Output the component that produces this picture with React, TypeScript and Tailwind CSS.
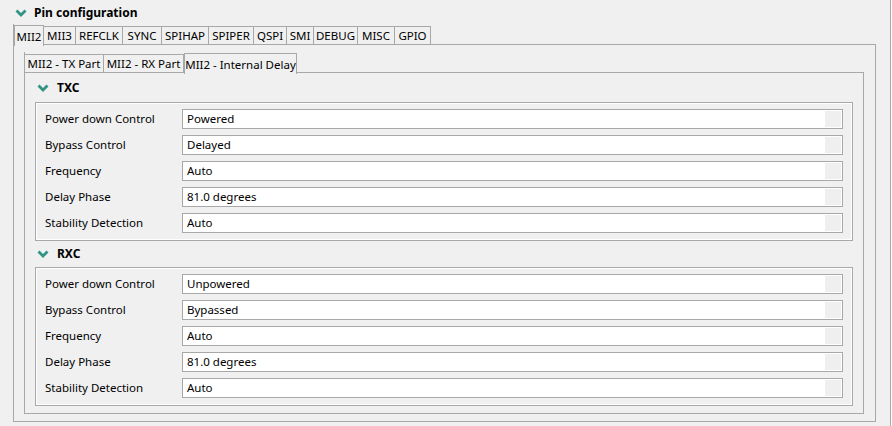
import React from "react"

const outerTabs: [string, number][] = [
  ["MII2", 30],
  ["MII3", 32],
  ["REFCLK", 47],
  ["SYNC", 39],
  ["SPIHAP", 47],
  ["SPIPER", 45],
  ["QSPI", 33],
  ["SMI", 27],
  ["DEBUG", 44],
  ["MISC", 37],
  ["GPIO", 36],
]

const innerTabs: [string, number][] = [
  ["MII2 - TX Part", 79],
  ["MII2 - RX Part", 80],
  ["MII2 - Internal Delay", 113],
]

const txc: [string, string][] = [
  ["Power down Control", "Powered"],
  ["Bypass Control", "Delayed"],
  ["Frequency", "Auto"],
  ["Delay Phase", "81.0 degrees"],
  ["Stability Detection", "Auto"],
]

const rxc: [string, string][] = [
  ["Power down Control", "Unpowered"],
  ["Bypass Control", "Bypassed"],
  ["Frequency", "Auto"],
  ["Delay Phase", "81.0 degrees"],
  ["Stability Detection", "Auto"],
]

function Chevron() {
  return (
    <svg width="12" height="8" viewBox="0 0 12 8" className="shrink-0">
      <polyline points="1.5,1.5 6,6 10.5,1.5" fill="none" stroke="#2f9484" strokeWidth="2.8" />
    </svg>
  )
}

function Tabs({ tabs, active }: { tabs: [string, number][]; active: number }) {
  return (
    <div className="flex items-end h-[21px]">
      {tabs.map(([name, w], i) =>
        i === active ? (
          <div
            key={name}
            style={{ width: w }}
            className="h-[21px] -mb-px bg-[#f0f0f0] border border-b-0 border-[#a8a8a8] flex items-center justify-center pt-px whitespace-nowrap relative z-10"
          >
            {name}
          </div>
        ) : (
          <div
            key={name}
            style={{ width: w }}
            className="h-[19px] border-t border-r border-b border-[#a8a8a8] flex items-center justify-center whitespace-nowrap"
          >
            {name}
          </div>
        )
      )}
      <div className="flex-1 border-b border-[#a8a8a8]" />
    </div>
  )
}

function Group({ rows }: { rows: [string, string][] }) {
  return (
    <div className="border border-[#a8a8a8] shadow-[inset_0_0_0_1px_#ffffff] pt-[6px] pb-[7px] pl-[9px] pr-[9px] flex flex-col gap-[6px]">
      {rows.map(([label, value]) => (
        <div key={label} className="flex items-center h-[20px]">
          <div className="w-[137px] shrink-0 whitespace-nowrap">{label}</div>
          <div className="flex-1 h-[20px] bg-white border border-[#a8a8a8] flex items-center">
            <div className="flex-1 pl-[4px] pb-px">{value}</div>
            <div className="w-[16px] h-[16px] bg-[#efefef] mr-px" />
          </div>
        </div>
      ))}
    </div>
  )
}

export default function App() {
  return (
    <div
      className="w-[891px] h-[426px] bg-[#f0f0f0] border-r border-[#a8a8a8] text-[11.5px] text-black leading-none"
      style={{ fontFamily: "'Noto Sans', 'Open Sans', sans-serif" }}
    >
      <div className="h-[24px] flex items-center pl-[15px] gap-[7px] pt-[2px]">
        <Chevron />
        <span className="font-bold text-[12px]">Pin configuration</span>
      </div>

      <div className="ml-[13px] w-[863px]">
        <div className="border-l border-[#a8a8a8]">
          <Tabs tabs={outerTabs} active={0} />
        </div>
        <div className="border-l border-r border-b border-[#a8a8a8] pt-[7px] pb-[7px] pl-[10px] pr-[11px]">
          <div className="border-l border-[#a8a8a8]">
            <Tabs tabs={innerTabs} active={2} />
          </div>
          <div className="border-l border-r border-b border-[#a8a8a8] px-[10px] pb-[7px]">
            <div className="h-[29px] flex items-center pl-[2px] gap-[8px]">
              <Chevron />
              <span className="font-bold text-[12px]">TXC</span>
            </div>
            <Group rows={txc} />
            <div className="h-[26px] flex items-center pl-[2px] gap-[8px]">
              <Chevron />
              <span className="font-bold text-[12px]">RXC</span>
            </div>
            <Group rows={rxc} />
          </div>
        </div>
      </div>
    </div>
  )
}
